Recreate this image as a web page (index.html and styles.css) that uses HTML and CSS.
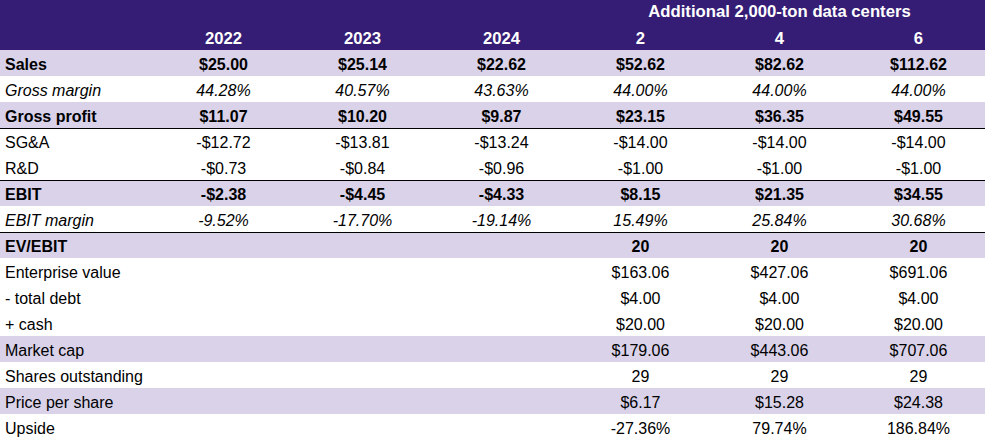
FILE: index.html
```html
<!DOCTYPE html>
<html>
<head>
<meta charset="utf-8">
<link rel="stylesheet" href="styles.css">
</head>
<body>
<table class="sheet">
  <colgroup>
    <col class="c-label">
    <col class="c-val"><col class="c-val"><col class="c-val">
    <col class="c-val"><col class="c-val"><col class="c-val">
  </colgroup>
  <thead>
    <tr class="h1">
      <th></th><th></th><th></th><th></th>
      <th colspan="3">Additional 2,000-ton data centers</th>
    </tr>
    <tr class="h2">
      <th></th><th>2022</th><th>2023</th><th>2024</th><th>2</th><th>4</th><th>6</th>
    </tr>
  </thead>
  <tbody>
    <tr class="shade bold"><td>Sales</td><td>$25.00</td><td>$25.14</td><td>$22.62</td><td>$52.62</td><td>$82.62</td><td>$112.62</td></tr>
    <tr class="ital"><td>Gross margin</td><td>44.28%</td><td>40.57%</td><td>43.63%</td><td>44.00%</td><td>44.00%</td><td>44.00%</td></tr>
    <tr class="shade bold rule"><td>Gross profit</td><td>$11.07</td><td>$10.20</td><td>$9.87</td><td>$23.15</td><td>$36.35</td><td>$49.55</td></tr>
    <tr><td>SG&amp;A</td><td>-$12.72</td><td>-$13.81</td><td>-$13.24</td><td>-$14.00</td><td>-$14.00</td><td>-$14.00</td></tr>
    <tr class="rule"><td>R&amp;D</td><td>-$0.73</td><td>-$0.84</td><td>-$0.96</td><td>-$1.00</td><td>-$1.00</td><td>-$1.00</td></tr>
    <tr class="shade bold"><td>EBIT</td><td>-$2.38</td><td>-$4.45</td><td>-$4.33</td><td>$8.15</td><td>$21.35</td><td>$34.55</td></tr>
    <tr class="ital rule"><td>EBIT margin</td><td>-9.52%</td><td>-17.70%</td><td>-19.14%</td><td>15.49%</td><td>25.84%</td><td>30.68%</td></tr>
    <tr class="shade bold"><td>EV/EBIT</td><td></td><td></td><td></td><td>20</td><td>20</td><td>20</td></tr>
    <tr><td>Enterprise value</td><td></td><td></td><td></td><td>$163.06</td><td>$427.06</td><td>$691.06</td></tr>
    <tr><td>- total debt</td><td></td><td></td><td></td><td>$4.00</td><td>$4.00</td><td>$4.00</td></tr>
    <tr><td>+ cash</td><td></td><td></td><td></td><td>$20.00</td><td>$20.00</td><td>$20.00</td></tr>
    <tr class="shade"><td>Market cap</td><td></td><td></td><td></td><td>$179.06</td><td>$443.06</td><td>$707.06</td></tr>
    <tr><td>Shares outstanding</td><td></td><td></td><td></td><td>29</td><td>29</td><td>29</td></tr>
    <tr class="shade"><td>Price per share</td><td></td><td></td><td></td><td>$6.17</td><td>$15.28</td><td>$24.38</td></tr>
    <tr><td>Upside</td><td></td><td></td><td></td><td>-27.36%</td><td>79.74%</td><td>186.84%</td></tr>
  </tbody>
</table>
</body>
</html>
```
FILE: styles.css
```css
html, body {
  margin: 0;
  padding: 0;
  background: #ffffff;
  overflow: hidden;
}
.sheet {
  border-collapse: collapse;
  table-layout: fixed;
  width: 988px;
  font-family: "Liberation Sans", Arial, sans-serif;
  font-size: 16px;
  color: #000000;
}
.c-label { width: 154px; }
.c-val { width: 139px; }
.sheet th,
.sheet td {
  padding: 0 4px;
  text-align: center;
  vertical-align: bottom;
  white-space: nowrap;
  overflow: hidden;
  box-sizing: border-box;
  line-height: 18px;
}
.sheet thead tr {
  background: #351c75;
  color: #ffffff;
}
.sheet thead th {
  font-weight: bold;
  font-size: 16.7px;
}
.h1 th { height: 25px; padding-bottom: 4px; }
.h2 th { height: 25px; padding-bottom: 2px; }
.sheet tbody td {
  height: 26px;
  padding-bottom: 2px;
}
.sheet tbody td:first-child {
  text-align: left;
  padding-left: 5px;
}
.shade { background: #d9d2e9; }
.bold td { font-weight: bold; }
.ital td { font-style: italic; }
.rule td { border-bottom: 1px solid #000000; }
```
